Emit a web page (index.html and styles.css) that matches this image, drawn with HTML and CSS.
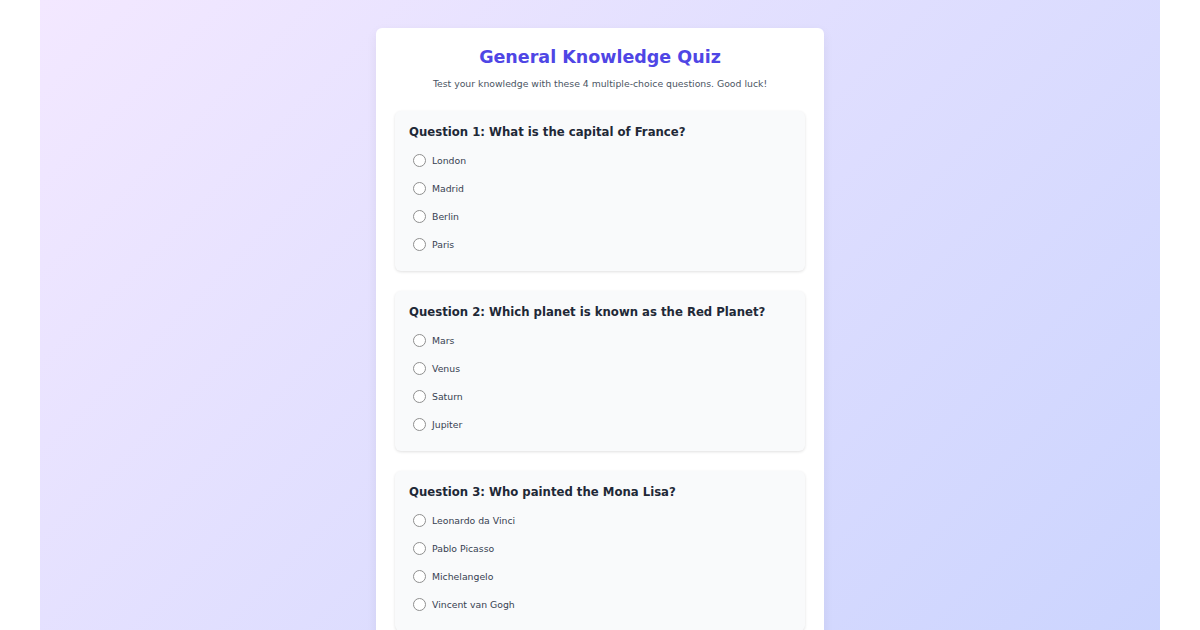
FILE: index.html
```html
<!DOCTYPE html>
<html>
<head>
<meta charset="utf-8">
<link rel="stylesheet" href="styles.css">
</head>
<body>
<div class="page">
  <div class="card">
    <h1 class="title">General Knowledge Quiz</h1>
    <p class="subtitle">Test your knowledge with these 4 multiple-choice questions. Good luck!</p>

    <div class="question">
      <h2 class="q-title">Question 1: What is the capital of France?</h2>
      <div class="options">
        <label class="option"><span class="radio"></span>London</label>
        <label class="option"><span class="radio"></span>Madrid</label>
        <label class="option"><span class="radio"></span>Berlin</label>
        <label class="option"><span class="radio"></span>Paris</label>
      </div>
    </div>

    <div class="question">
      <h2 class="q-title">Question 2: Which planet is known as the Red Planet?</h2>
      <div class="options">
        <label class="option"><span class="radio"></span>Mars</label>
        <label class="option"><span class="radio"></span>Venus</label>
        <label class="option"><span class="radio"></span>Saturn</label>
        <label class="option"><span class="radio"></span>Jupiter</label>
      </div>
    </div>

    <div class="question">
      <h2 class="q-title">Question 3: Who painted the Mona Lisa?</h2>
      <div class="options">
        <label class="option"><span class="radio"></span>Leonardo da Vinci</label>
        <label class="option"><span class="radio"></span>Pablo Picasso</label>
        <label class="option"><span class="radio"></span>Michelangelo</label>
        <label class="option"><span class="radio"></span>Vincent van Gogh</label>
      </div>
    </div>

    <div class="question">
      <h2 class="q-title">Question 4: What is the largest ocean on Earth?</h2>
      <div class="options">
        <label class="option"><span class="radio"></span>Atlantic Ocean</label>
        <label class="option"><span class="radio"></span>Indian Ocean</label>
        <label class="option"><span class="radio"></span>Arctic Ocean</label>
        <label class="option"><span class="radio"></span>Pacific Ocean</label>
      </div>
    </div>
  </div>
</div>
</body>
</html>
```

FILE: styles.css
```css
html, body {
  margin: 0;
  padding: 0;
  background: #ffffff;
}
body {
  font-family: "DejaVu Sans", sans-serif;
  overflow: hidden;
}
.page {
  max-width: 1120px;
  margin: 0 auto;
  min-height: 630px;
  background: linear-gradient(135deg, #f3e8ff 0%, #c7d2fe 100%);
  padding-top: 28px;
  box-sizing: border-box;
}
.card {
  width: 448px;
  margin: 0 auto;
  background: #ffffff;
  border-radius: 6px;
  box-shadow: 0 4px 12px rgba(0,0,0,0.06);
  padding: 18px 19px 20px;
  box-sizing: border-box;
}
.title {
  margin: 0;
  text-align: center;
  font-size: 17.5px;
  line-height: 22px;
  font-weight: bold;
  color: #4f46e5;
}
.subtitle {
  margin: 10px 0 0;
  text-align: center;
  font-size: 9.3px;
  line-height: 12px;
  color: #4b5563;
}
.question {
  margin-top: 20px;
  background: #f9fafb;
  border-radius: 6px;
  box-shadow: 0 1px 3px rgba(0,0,0,0.12);
  padding: 14px 14px 13px;
}
.subtitle + .question {
  margin-top: 21px;
}
.q-title {
  margin: 0;
  font-size: 11.7px;
  line-height: 14px;
  font-weight: bold;
  color: #1f2937;
}
.options {
  display: flex;
  flex-direction: column;
  margin-top: 7px;
}
.option {
  display: flex;
  align-items: center;
  height: 28px;
  font-size: 9.3px;
  color: #374151;
}
.radio {
  width: 11px;
  height: 11px;
  border: 1px solid #8f8f8f;
  border-radius: 50%;
  background: #ffffff;
  margin-left: 4px;
  margin-right: 6px;
  flex: none;
}
```
